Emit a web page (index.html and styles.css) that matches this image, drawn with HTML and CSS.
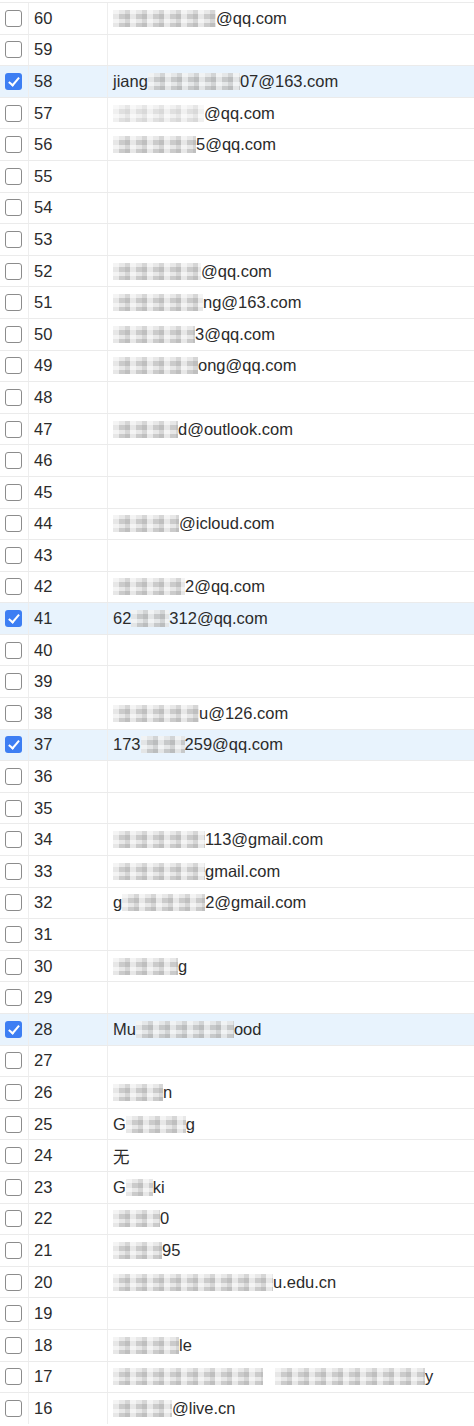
FILE: index.html
```html
<!DOCTYPE html>
<html lang="zh-CN">
<head>
<meta charset="utf-8">
<link rel="stylesheet" href="styles.css">
</head>
<body>
<div class="table">
  <div class="row"><div class="c-check"><span class="cb"></span></div><div class="c-num">60</div><div class="c-mail"><span class="blur" style="width:103px"></span>@qq.com</div></div>
  <div class="row"><div class="c-check"><span class="cb"></span></div><div class="c-num">59</div><div class="c-mail"></div></div>
  <div class="row sel"><div class="c-check"><span class="cb on"></span></div><div class="c-num">58</div><div class="c-mail">jiang<span class="blur" style="width:92px"></span>07@163.com</div></div>
  <div class="row"><div class="c-check"><span class="cb"></span></div><div class="c-num">57</div><div class="c-mail"><span class="blur light" style="width:91px"></span>@qq.com</div></div>
  <div class="row"><div class="c-check"><span class="cb"></span></div><div class="c-num">56</div><div class="c-mail"><span class="blur" style="width:83px"></span>5@qq.com</div></div>
  <div class="row"><div class="c-check"><span class="cb"></span></div><div class="c-num">55</div><div class="c-mail"></div></div>
  <div class="row"><div class="c-check"><span class="cb"></span></div><div class="c-num">54</div><div class="c-mail"></div></div>
  <div class="row"><div class="c-check"><span class="cb"></span></div><div class="c-num">53</div><div class="c-mail"></div></div>
  <div class="row"><div class="c-check"><span class="cb"></span></div><div class="c-num">52</div><div class="c-mail"><span class="blur" style="width:88px"></span>@qq.com</div></div>
  <div class="row"><div class="c-check"><span class="cb"></span></div><div class="c-num">51</div><div class="c-mail"><span class="blur" style="width:90px"></span>ng@163.com</div></div>
  <div class="row"><div class="c-check"><span class="cb"></span></div><div class="c-num">50</div><div class="c-mail"><span class="blur" style="width:82px"></span>3@qq.com</div></div>
  <div class="row"><div class="c-check"><span class="cb"></span></div><div class="c-num">49</div><div class="c-mail"><span class="blur" style="width:85px"></span>ong@qq.com</div></div>
  <div class="row"><div class="c-check"><span class="cb"></span></div><div class="c-num">48</div><div class="c-mail"></div></div>
  <div class="row"><div class="c-check"><span class="cb"></span></div><div class="c-num">47</div><div class="c-mail"><span class="blur" style="width:65px"></span>d@outlook.com</div></div>
  <div class="row"><div class="c-check"><span class="cb"></span></div><div class="c-num">46</div><div class="c-mail"></div></div>
  <div class="row"><div class="c-check"><span class="cb"></span></div><div class="c-num">45</div><div class="c-mail"></div></div>
  <div class="row"><div class="c-check"><span class="cb"></span></div><div class="c-num">44</div><div class="c-mail"><span class="blur" style="width:66px"></span>@icloud.com</div></div>
  <div class="row"><div class="c-check"><span class="cb"></span></div><div class="c-num">43</div><div class="c-mail"></div></div>
  <div class="row"><div class="c-check"><span class="cb"></span></div><div class="c-num">42</div><div class="c-mail"><span class="blur" style="width:72px"></span>2@qq.com</div></div>
  <div class="row sel"><div class="c-check"><span class="cb on"></span></div><div class="c-num">41</div><div class="c-mail">62<span class="blur" style="width:38px"></span>312@qq.com</div></div>
  <div class="row"><div class="c-check"><span class="cb"></span></div><div class="c-num">40</div><div class="c-mail"></div></div>
  <div class="row"><div class="c-check"><span class="cb"></span></div><div class="c-num">39</div><div class="c-mail"></div></div>
  <div class="row"><div class="c-check"><span class="cb"></span></div><div class="c-num">38</div><div class="c-mail"><span class="blur" style="width:86px"></span>u@126.com</div></div>
  <div class="row sel"><div class="c-check"><span class="cb on"></span></div><div class="c-num">37</div><div class="c-mail">173<span class="blur" style="width:44px"></span>259@qq.com</div></div>
  <div class="row"><div class="c-check"><span class="cb"></span></div><div class="c-num">36</div><div class="c-mail"></div></div>
  <div class="row"><div class="c-check"><span class="cb"></span></div><div class="c-num">35</div><div class="c-mail"></div></div>
  <div class="row"><div class="c-check"><span class="cb"></span></div><div class="c-num">34</div><div class="c-mail"><span class="blur" style="width:92px"></span>113@gmail.com</div></div>
  <div class="row"><div class="c-check"><span class="cb"></span></div><div class="c-num">33</div><div class="c-mail"><span class="blur" style="width:92px"></span>gmail.com</div></div>
  <div class="row"><div class="c-check"><span class="cb"></span></div><div class="c-num">32</div><div class="c-mail">g<span class="blur" style="width:83px"></span>2@gmail.com</div></div>
  <div class="row"><div class="c-check"><span class="cb"></span></div><div class="c-num">31</div><div class="c-mail"></div></div>
  <div class="row"><div class="c-check"><span class="cb"></span></div><div class="c-num">30</div><div class="c-mail"><span class="blur" style="width:65px"></span>g</div></div>
  <div class="row"><div class="c-check"><span class="cb"></span></div><div class="c-num">29</div><div class="c-mail"></div></div>
  <div class="row sel"><div class="c-check"><span class="cb on"></span></div><div class="c-num">28</div><div class="c-mail">Mu<span class="blur" style="width:98px"></span>ood</div></div>
  <div class="row"><div class="c-check"><span class="cb"></span></div><div class="c-num">27</div><div class="c-mail"></div></div>
  <div class="row"><div class="c-check"><span class="cb"></span></div><div class="c-num">26</div><div class="c-mail"><span class="blur" style="width:50px"></span>n</div></div>
  <div class="row"><div class="c-check"><span class="cb"></span></div><div class="c-num">25</div><div class="c-mail">G<span class="blur" style="width:60px"></span>g</div></div>
  <div class="row"><div class="c-check"><span class="cb"></span></div><div class="c-num">24</div><div class="c-mail">无</div></div>
  <div class="row"><div class="c-check"><span class="cb"></span></div><div class="c-num">23</div><div class="c-mail">G<span class="blur" style="width:27px"></span>ki</div></div>
  <div class="row"><div class="c-check"><span class="cb"></span></div><div class="c-num">22</div><div class="c-mail"><span class="blur" style="width:47px"></span>0</div></div>
  <div class="row"><div class="c-check"><span class="cb"></span></div><div class="c-num">21</div><div class="c-mail"><span class="blur" style="width:49px"></span>95</div></div>
  <div class="row"><div class="c-check"><span class="cb"></span></div><div class="c-num">20</div><div class="c-mail"><span class="blur" style="width:160px"></span>u.edu.cn</div></div>
  <div class="row"><div class="c-check"><span class="cb"></span></div><div class="c-num">19</div><div class="c-mail"></div></div>
  <div class="row"><div class="c-check"><span class="cb"></span></div><div class="c-num">18</div><div class="c-mail"><span class="blur" style="width:66px"></span>le</div></div>
  <div class="row"><div class="c-check"><span class="cb"></span></div><div class="c-num">17</div><div class="c-mail"><span class="blur" style="width:150px"></span><span class="gap"></span><span class="blur" style="width:150px"></span>y</div></div>
  <div class="row"><div class="c-check"><span class="cb"></span></div><div class="c-num">16</div><div class="c-mail"><span class="blur" style="width:59px"></span>@live.cn</div></div>
</div>
</body>
</html>
```

FILE: styles.css
```css
html, body {
  margin: 0;
  padding: 0;
  background: #ffffff;
}

body {
  font-family: "Liberation Sans", "Noto Sans CJK SC", sans-serif;
  color: #2b2b2b;
  font-size: 16.5px;
}

.table {
  padding-top: 2px;
}

.row {
  display: grid;
  grid-template-columns: 29px 79px 1fr;
  height: 31.6px;
  box-sizing: border-box;
  border-top: 1px solid #ebebeb;
  background: #ffffff;
}

.row.sel {
  background: #e8f3fd;
}

.c-check,
.c-num,
.c-mail {
  display: flex;
  align-items: center;
  height: 100%;
  box-sizing: border-box;
}

.c-check {
  border-right: 1px solid #eeeeee;
  padding-left: 5px;
}

.c-num {
  border-right: 1px solid #eeeeee;
  padding-left: 5px;
}

.c-mail {
  padding-left: 5px;
  white-space: nowrap;
  overflow: hidden;
}

.cb {
  width: 17px;
  height: 17px;
  box-sizing: border-box;
  border: 1.5px solid #8c8c8c;
  border-radius: 3px;
  background: #ffffff;
  display: block;
  position: relative;
}

.cb.on {
  border: none;
  background: #3d7ef3;
}

.cb.on::after {
  content: "";
  position: absolute;
  left: 5.5px;
  top: 2px;
  width: 4px;
  height: 9px;
  border: solid #ffffff;
  border-width: 0 2.2px 2.2px 0;
  transform: rotate(40deg);
}

.blur {
  display: inline-block;
  height: 17px;
  vertical-align: middle;
  background-color: #cfcfcf;
  background-image:
    linear-gradient(90deg, rgba(255,255,255,0.55) 0 35%, rgba(255,255,255,0) 35% 70%, rgba(140,140,140,0.25) 70% 100%),
    linear-gradient(180deg, rgba(255,255,255,0.45) 0 50%, rgba(120,120,120,0.15) 50% 100%);
  background-size: 17px 100%, 100% 9px;
  opacity: 0.85;
}

.blur.light {
  opacity: 0.5;
}

.gap {
  display: inline-block;
  width: 12px;
}
```
